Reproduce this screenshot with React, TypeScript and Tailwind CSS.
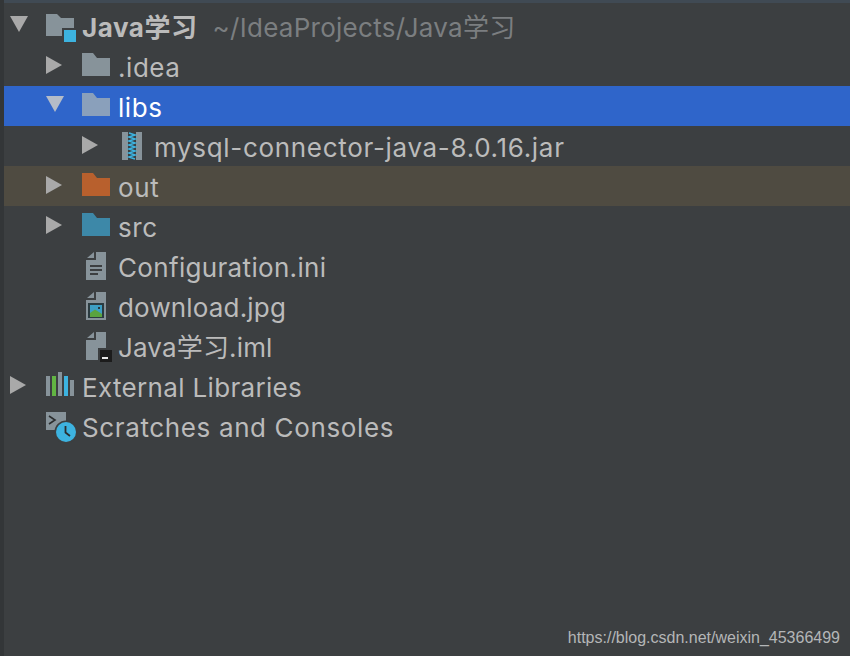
import React from "react";

const Arrow = ({ open, color = "#a9a9a9" }: { open?: boolean; color?: string }) => (
  <svg width="36" height="40" viewBox="0 0 36 40" className="shrink-0">
    {open ? <polygon points="0,10 18,10 9,26" fill={color} /> : <polygon points="0,10 16,19 0,28" fill={color} />}
  </svg>
);

const Folder = ({ color }: { color: string }) => (
  <svg width="36" height="40" viewBox="0 0 36 40" className="shrink-0">
    <path d="M0 7H11L15 12H28V30H0Z" fill={color} />
  </svg>
);

const RootIcon = () => (
  <svg width="36" height="40" viewBox="0 0 36 40" className="shrink-0">
    <path d="M0 8H11L15 12H28V30H0Z" fill="#87939a" />
    <rect x="16" y="22" width="14" height="16" fill="#3c3f41" />
    <rect x="18" y="24" width="12" height="12" fill="#3db3e0" />
  </svg>
);

const Jar = () => (
  <svg width="36" height="40" viewBox="0 0 36 40" className="shrink-0">
    <rect x="4" y="6" width="20" height="28" fill="#87939a" />
    <rect x="10" y="6" width="8" height="28" fill="#3c3f41" />
    <path
      d="M11 7L17 9L11 11L17 13L11 15L17 17L11 19L17 21L11 23L17 25L11 27L17 29L11 31L17 33"
      fill="none"
      stroke="#3db3e0"
      strokeWidth="1.6"
    />
  </svg>
);

const Doc = ({ children }: { children?: React.ReactNode }) => (
  <svg width="36" height="40" viewBox="0 0 36 40" className="shrink-0">
    <path d="M14 6H24V34H4V14H14Z" fill="#87939a" />
    <path d="M12 6V12H5Z" fill="#87939a" />
    {children}
  </svg>
);

const Libs = () => (
  <svg width="36" height="40" viewBox="0 0 36 40" className="shrink-0">
    <rect x="0" y="10" width="4" height="20" fill="#87939a" />
    <rect x="6" y="10" width="4" height="20" fill="#62b543" />
    <rect x="12" y="6" width="4" height="24" fill="#87939a" />
    <rect x="18" y="10" width="4" height="20" fill="#3db3e0" />
    <rect x="24" y="14" width="4" height="16" fill="#87939a" />
  </svg>
);

const Scratch = () => (
  <svg width="36" height="40" viewBox="0 0 36 40" className="shrink-0">
    <rect x="0" y="6" width="20" height="18" fill="#87939a" />
    <path d="M3 10L9 14L3 18" fill="none" stroke="#2b2d2e" strokeWidth="1.6" />
    <circle cx="20" cy="26" r="11.5" fill="#3c3f41" />
    <circle cx="20" cy="26" r="10" fill="#3db3e0" />
    <path d="M19.5 20V26.5L24 30" fill="none" stroke="#2b2d2e" strokeWidth="1.8" />
  </svg>
);

const Row = ({
  depth,
  arrow,
  icon,
  children,
  className = "text-[#bbbbbb]",
}: {
  depth: number;
  arrow?: React.ReactNode;
  icon: React.ReactNode;
  children: React.ReactNode;
  className?: string;
}) => (
  <div
    className={`flex h-10 items-center whitespace-nowrap ${className} ${
      depth === 0 ? "pl-[6px]" : depth === 1 ? "pl-[42px]" : "pl-[78px]"
    }`}
  >
    {arrow ?? <div className="w-9 shrink-0" />}
    {icon}
    <div className="pt-[2px]">{children}</div>
  </div>
);

export default function App() {
  return (
    <div
      className="relative flex h-[656px] w-[850px] flex-col overflow-hidden bg-[#3c3f41] text-[26px]"
      style={{ fontFamily: '"Inter", "Noto Sans CJK SC", sans-serif' }}
    >
      <div className="flex min-h-0 flex-1">
        <div className="w-1 shrink-0 bg-[#333638]" />
        <div className="min-w-0 flex-1">
          <div className="h-[3px] bg-[#404a54]" />
          <div className="pt-[3px]">
            <Row depth={0} arrow={<Arrow open />} icon={<RootIcon />}>
              <span className="font-bold tracking-[0.55px]">Java学习</span>
              <span className="ml-[15px] tracking-[0.27px] text-[#7b7e80]">~/IdeaProjects/Java学习</span>
            </Row>
            <Row depth={1} arrow={<Arrow />} icon={<Folder color="#87939a" />}>
              <span className="tracking-[0.55px]">.idea</span>
            </Row>
            <Row depth={1} className="bg-[#2f65ca] text-white" arrow={<Arrow open color="#b4bcc8" />} icon={<Folder color="#8aa0bb" />}>
              <span className="tracking-[0.55px]">libs</span>
            </Row>
            <Row depth={2} arrow={<Arrow />} icon={<Jar />}>
              <span className="tracking-[0.68px]">mysql-connector-java-8.0.16.jar</span>
            </Row>
            <Row depth={1} className="bg-[#4f4b41] text-[#bbbbbb]" arrow={<Arrow />} icon={<Folder color="#b8602d" />}>
              <span className="tracking-[0.7px]">out</span>
            </Row>
            <Row depth={1} arrow={<Arrow />} icon={<Folder color="#3d88a8" />}>
              <span className="tracking-[0.55px]">src</span>
            </Row>
            <Row
              depth={1}
              icon={
                <Doc>
                  <rect x="8" y="19" width="12" height="2" fill="#3c3f41" />
                  <rect x="8" y="23" width="12" height="2" fill="#3c3f41" />
                  <rect x="8" y="27" width="8" height="2" fill="#3c3f41" />
                </Doc>
              }
            >
              <span className="tracking-[0.33px]">Configuration.ini</span>
            </Row>
            <Row
              depth={1}
              icon={
                <Doc>
                  <rect x="6" y="17" width="16" height="15" fill="#2b3b40" />
                  <rect x="8" y="19" width="12" height="12" fill="#3d9fc4" />
                  <path d="M8 27L13 23.5L20 28V31H8Z" fill="#5aa33f" />
                  <rect x="16" y="21" width="2" height="2" fill="#2b3b40" />
                </Doc>
              }
            >
              <span className="tracking-[0.17px]">download.jpg</span>
            </Row>
            <Row
              depth={1}
              icon={
                <Doc>
                  <rect x="16" y="22" width="14" height="14" fill="#3c3f41" />
                  <rect x="18" y="24" width="12" height="12" fill="#1c1c1c" />
                  <rect x="20" y="31" width="6" height="2" fill="#e8e8e8" />
                </Doc>
              }
            >
              <span className="tracking-[0.15px]">Java学习.iml</span>
            </Row>
            <Row depth={0} arrow={<Arrow />} icon={<Libs />}>
              <span className="tracking-[0.33px]">External Libraries</span>
            </Row>
            <Row depth={0} icon={<Scratch />}>
              <span className="tracking-[0.63px]">Scratches and Consoles</span>
            </Row>
          </div>
        </div>
      </div>
      <div
        className="absolute right-[10px] top-[626px] text-[16px] tracking-normal text-[#b4b6b7]"
        style={{ fontFamily: '"Liberation Sans", sans-serif' }}
      >
        https://blog.csdn.net/weixin_45366499
      </div>
    </div>
  );
}
